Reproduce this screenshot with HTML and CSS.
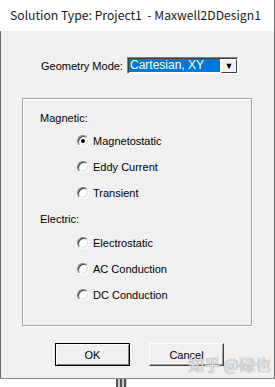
FILE: index.html
```html
<!DOCTYPE html>
<html lang="en">
  <head>
    <meta charset="UTF-8" />
    <link rel="stylesheet" href="styles.css">
    <title>Solution Type</title>
  </head>
  <body>
    <div class="window">
      <div class="titlebar">Solution Type: Project1&nbsp; - Maxwell2DDesign1</div>
      <div class="content">
        <div class="mode-row">
          <span class="mode-label">Geometry Mode:</span>
          <div class="combo">
            <span class="combo-value">Cartesian, XY</span>
            <span class="combo-btn">&#9660;</span>
          </div>
        </div>

        <div class="group">
          <div class="group-title">Magnetic:</div>
          <div class="radio checked"><span class="dot"></span>Magnetostatic</div>
          <div class="radio"><span class="dot"></span>Eddy Current</div>
          <div class="radio"><span class="dot"></span>Transient</div>
          <div class="group-title second">Electric:</div>
          <div class="radio"><span class="dot"></span>Electrostatic</div>
          <div class="radio"><span class="dot"></span>AC Conduction</div>
          <div class="radio"><span class="dot"></span>DC Conduction</div>
        </div>

        <div class="buttons">
          <button class="default">OK</button>
          <button>Cancel</button>
        </div>
      </div>
      <div class="watermark">知乎 @碌也</div>
    </div>
    <div class="stub"></div>
  </body>
</html>
```

FILE: styles.css
```css
body {
  margin: 0;
  background-color: #ffffff;
  font-family: "Liberation Sans", Arial, sans-serif;
  font-size: 11px;
  color: #000;
}

.window {
  position: relative;
  width: 275px;
  height: 379px;
  box-sizing: border-box;
  border-right: 1px solid #6a6a6a;
  border-bottom: 1px solid #8a8a8a;
  background-color: #f0f0f0;
}

.titlebar {
  height: 31px;
  line-height: 31px;
  padding-left: 10px;
  background-color: #ffffff;
  font-family: "Noto Sans CJK SC", "Noto Sans", sans-serif;
  font-size: 12.2px;
  color: #1a1a1a;
  white-space: nowrap;
}

.content {
  height: 347px;
  border-left: 1px solid #6a6a6a;
  padding-top: 26px;
  box-sizing: border-box;
}

.mode-row {
  display: flex;
  align-items: center;
  height: 17px;
  padding-left: 40px;
}

.mode-label {
  width: 86px;
}

.combo {
  display: flex;
  width: 111px;
  height: 17px;
  box-sizing: border-box;
  border-top: 1px solid #808080;
  border-left: 1px solid #808080;
  border-right: 1px solid #ffffff;
  border-bottom: 1px solid #ffffff;
  box-shadow: inset 1px 1px 0 #404040;
  background: #fff;
}

.combo-value {
  flex: 1;
  margin: 1px 0 1px 1px;
  background-color: #0078d7;
  color: #fff;
  font-size: 12px;
  line-height: 13px;
  padding-left: 1px;
}

.combo-btn {
  width: 16px;
  margin: 1px 0 0 1px;
  box-sizing: border-box;
  background: #f0f0f0;
  border-top: 1px solid #fff;
  border-left: 1px solid #fff;
  border-right: 1px solid #404040;
  border-bottom: 1px solid #404040;
  font-size: 9px;
  line-height: 13px;
  text-align: center;
}

.group {
  margin: 24px 0 0 21px;
  width: 230px;
  height: 228px;
  box-sizing: border-box;
  border: 1px solid #a0a0a0;
  box-shadow: inset 1px 1px 0 #ffffff, 1px 1px 0 #ffffff;
  padding: 13px 0 0 17px;
}

.group-title {
  line-height: 13px;
  height: 13px;
  margin-bottom: 3px;
}

.group-title.second {
  margin-top: 7px;
  margin-bottom: 4px;
}

.radio {
  display: flex;
  align-items: center;
  height: 26px;
  padding-left: 37px;
}

.dot {
  width: 12px;
  height: 12px;
  margin-right: 4px;
  box-sizing: border-box;
  border-radius: 50%;
  background: #fff;
  border: 1px solid;
  border-color: #808080 #ffffff #ffffff #808080;
  box-shadow: inset 1px 1px 0 #404040, inset -1px -1px 0 #dcdcdc;
  position: relative;
}

.radio.checked .dot::after {
  content: "";
  position: absolute;
  left: 3px;
  top: 3px;
  width: 4px;
  height: 4px;
  border-radius: 50%;
  background: #000;
}

.buttons {
  display: flex;
  gap: 19px;
  padding: 17px 0 0 54px;
}

button {
  width: 75px;
  height: 23px;
  padding: 0;
  font-family: "Liberation Sans", Arial, sans-serif;
  font-size: 11px;
  color: #000;
  background-color: #f0f0f0;
  border-top: 1px solid #ffffff;
  border-left: 1px solid #ffffff;
  border-right: 1px solid #404040;
  border-bottom: 1px solid #404040;
  box-shadow: inset -1px -1px 0 #a0a0a0;
}

button.default {
  border: 1px solid #000;
  box-shadow: inset 1px 1px 0 #ffffff, inset -1px -1px 0 #808080;
}

.watermark {
  position: absolute;
  right: 3px;
  bottom: 5px;
  font-family: "Noto Sans CJK SC", sans-serif;
  font-size: 16px;
  line-height: 18px;
  color: rgba(255, 255, 255, 0.7);
  text-shadow: 0 0 1px #9a9a9a, 0 0 1px #9a9a9a;
}

.stub {
  width: 11px;
  height: 8px;
  margin-left: 116px;
  background: repeating-linear-gradient(90deg, #555 0 2px, #ccc 2px 4px);
}
```
